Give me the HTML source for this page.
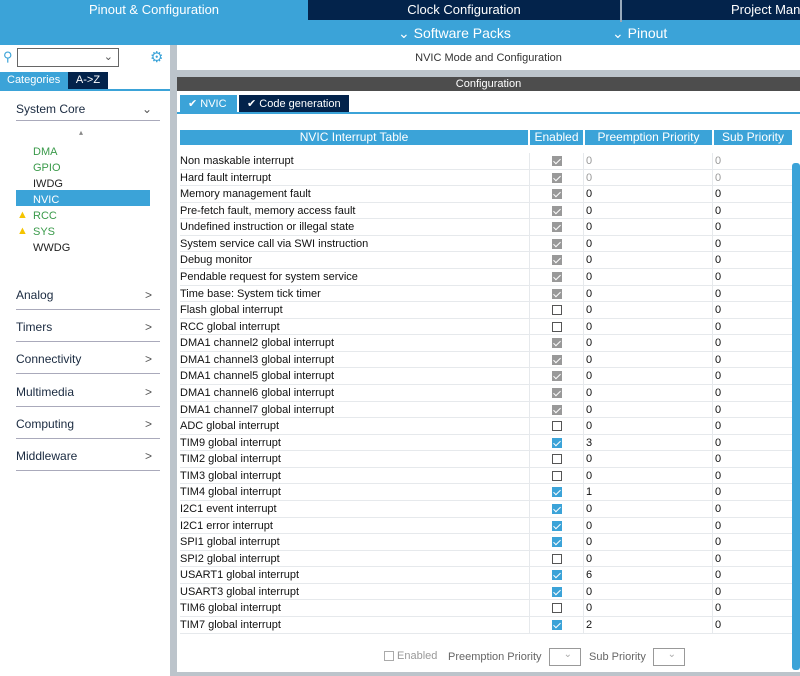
<!DOCTYPE html>
<html><head><meta charset="utf-8"><style>
*{box-sizing:border-box;margin:0;padding:0}
body{width:800px;height:676px;overflow:hidden;background:#fff;font-family:"Liberation Sans",Arial,sans-serif;font-size:11px;color:#111;position:relative}
.a{position:absolute}
.row{position:absolute;left:180px;width:612px;height:16.6px;border-bottom:1px solid #e6e9ec}
.row span{position:absolute;top:2px}
.cb{position:absolute;left:372px;top:3px;width:10px;height:10px;border:1px solid #555;background:#fff}
.cb.g{background:#999;border-color:#999}
.cb.b{background:#3ba3d8;border-color:#3ba3d8}
.cb.g:after,.cb.b:after{content:"";position:absolute;left:2px;top:0px;width:3px;height:6px;border:solid #fff;border-width:0 1.5px 1.5px 0;transform:rotate(45deg)}
.cat{position:absolute;left:16px;width:144px;font-size:12px;color:#1a2a40;border-bottom:1px solid #aab;height:22px}
.cat i{position:absolute;right:8px;font-style:normal;color:#555}
.th{position:absolute;top:130px;height:15px;background:#3ba3d8;color:#fff;text-align:center;line-height:15px;font-size:12px;white-space:nowrap}
</style></head><body>
<div class="a" style="left:0;top:0;width:308px;height:22px;background:#3ba3d8;color:#fff;font-size:13px;text-align:center;line-height:19px">Pinout &amp; Configuration</div>
<div class="a" style="left:308px;top:0;width:492px;height:22px;background:#03234b;border-bottom:2px solid #3ba3d8"></div>
<div class="a" style="left:308px;top:0;width:312px;height:20px;color:#fff;font-size:13px;text-align:center;line-height:19px">Clock Configuration</div>
<div class="a" style="left:620px;top:0;width:2px;height:22px;background:#9ab"></div>
<div class="a" style="left:731px;top:0;color:#fff;font-size:13px;line-height:19px;white-space:nowrap">Project Mana</div>
<div class="a" style="left:0;top:22px;width:800px;height:23px;background:#3ba3d8;color:#fff;font-size:14px">
<span class="a" style="left:398px;top:3px">⌄ Software Packs</span><span class="a" style="left:612px;top:3px">⌄ Pinout</span></div>
<!-- left -->
<div class="a" style="left:170px;top:45px;width:7px;height:631px;background:#bcc4cb"></div>
<div class="a" style="left:3px;top:49px;color:#3ba3d8;font-size:13px">&#9906;</div>
<div class="a" style="left:17px;top:48px;width:102px;height:19px;border:1px solid #666"><span class="a" style="right:5px;top:1px;color:#555">⌄</span></div>
<div class="a" style="left:150px;top:48px;color:#3ba3d8;font-size:15px">⚙</div>
<div class="a" style="left:0;top:72px;width:68px;height:17px;background:#3ba3d8;color:#fff;font-size:11px;padding:2px 7px;white-space:nowrap">Categories</div>
<div class="a" style="left:68px;top:72px;width:40px;height:17px;background:#03234b;color:#fff;font-size:11px;padding:2px 0;text-align:center;white-space:nowrap">A-&gt;Z</div>
<div class="a" style="left:0;top:89px;width:170px;height:2px;background:#3ba3d8"></div>
<div class="cat" style="top:102px;height:19px">System Core<i>⌄</i></div>
<div class="a" style="left:79px;top:128px;font-size:8px;color:#888">▴</div>
<div class="a" style="left:16px;top:190px;width:134px;height:16px;background:#3ba3d8"></div>
<div class="a" style="left:33px;top:144px;font-size:11px;line-height:16px;color:#3a9a4a">DMA<br>GPIO<br><span style="color:#222">IWDG</span><br><span style="color:#fff">NVIC</span><br>RCC<br>SYS<br><span style="color:#222">WWDG</span></div>
<div class="a" style="left:17px;top:207px;color:#f5c400;font-size:11px;line-height:16px">▲<br>▲</div>
<div class="cat" style="top:288px">Analog<i>&gt;</i></div>
<div class="cat" style="top:320px">Timers<i>&gt;</i></div>
<div class="cat" style="top:352px">Connectivity<i>&gt;</i></div>
<div class="cat" style="top:385px">Multimedia<i>&gt;</i></div>
<div class="cat" style="top:417px">Computing<i>&gt;</i></div>
<div class="cat" style="top:449px">Middleware<i>&gt;</i></div>
<!-- right -->
<div class="a" style="left:177px;top:45px;width:623px;height:25px;text-align:center;line-height:26px;color:#333">NVIC Mode and Configuration</div>
<div class="a" style="left:177px;top:70px;width:623px;height:7px;background:#bcc4cb"></div>
<div class="a" style="left:177px;top:77px;width:623px;height:14px;background:#4d4d4d;color:#fff;text-align:center;line-height:14px">Configuration</div>
<div class="a" style="left:180px;top:95px;width:57px;height:17px;background:#3ba3d8;color:#fff;padding:2px 8px">✔ NVIC</div>
<div class="a" style="left:239px;top:95px;width:110px;height:17px;background:#03234b;color:#fff;padding:2px 8px">✔ Code generation</div>
<div class="a" style="left:177px;top:112px;width:623px;height:2px;background:#3ba3d8"></div>
<div class="th" style="left:180px;width:348px">NVIC Interrupt Table</div>
<div class="th" style="left:530px;width:53px">Enabled</div>
<div class="th" style="left:585px;width:127px">Preemption Priority</div>
<div class="th" style="left:714px;width:78px">Sub Priority</div>
<div class="a" style="left:792px;top:163px;width:8px;height:507px;background:#3ba3d8;border-radius:3px"></div>
<div class="a" style="left:529px;top:153px;width:1px;height:480px;background:#e6e9ec"></div>
<div class="a" style="left:583px;top:153px;width:1px;height:480px;background:#e6e9ec"></div>
<div class="a" style="left:712px;top:153px;width:1px;height:480px;background:#e6e9ec"></div>
<div id="rows"></div>
<div class="a" style="left:384px;top:651px;width:10px;height:10px;border:1px solid #aaa"></div>
<div class="a" style="left:397px;top:650px;color:#999">Enabled</div>
<div class="a" style="left:448px;top:651px;color:#666">Preemption Priority</div>
<div class="a" style="left:549px;top:648px;width:32px;height:18px;border:1px solid #999;color:#aaa;text-align:right;padding-right:8px;font-size:10px">⌄</div>
<div class="a" style="left:589px;top:651px;color:#666">Sub Priority</div>
<div class="a" style="left:653px;top:648px;width:32px;height:18px;border:1px solid #999;color:#aaa;text-align:right;padding-right:8px;font-size:10px">⌄</div>
<div class="a" style="left:177px;top:672px;width:623px;height:4px;background:#bcc4cb"></div>
<script>
var d=[["Non maskable interrupt","g",0,0,1],["Hard fault interrupt","g",0,0,1],["Memory management fault","g",0,0],["Pre-fetch fault, memory access fault","g",0,0],["Undefined instruction or illegal state","g",0,0],["System service call via SWI instruction","g",0,0],["Debug monitor","g",0,0],["Pendable request for system service","g",0,0],["Time base: System tick timer","g",0,0],["Flash global interrupt","e",0,0],["RCC global interrupt","e",0,0],["DMA1 channel2 global interrupt","g",0,0],["DMA1 channel3 global interrupt","g",0,0],["DMA1 channel5 global interrupt","g",0,0],["DMA1 channel6 global interrupt","g",0,0],["DMA1 channel7 global interrupt","g",0,0],["ADC global interrupt","e",0,0],["TIM9 global interrupt","b",3,0],["TIM2 global interrupt","e",0,0],["TIM3 global interrupt","e",0,0],["TIM4 global interrupt","b",1,0],["I2C1 event interrupt","b",0,0],["I2C1 error interrupt","b",0,0],["SPI1 global interrupt","b",0,0],["SPI2 global interrupt","e",0,0],["USART1 global interrupt","b",6,0],["USART3 global interrupt","b",0,0],["TIM6 global interrupt","e",0,0],["TIM7 global interrupt","b",2,0]];
var h="";d.forEach(function(r,i){var c=r[4]?"color:#999":"";h+='<div class="row" style="top:'+(153+i*16.57)+'px"><span style="left:0">'+r[0]+'</span><div class="cb '+r[1]+'"></div><span style="left:406px;'+c+'">'+r[2]+'</span><span style="left:535px;'+c+'">'+r[3]+'</span></div>'});
document.getElementById("rows").innerHTML=h;
</script>
</body></html>
